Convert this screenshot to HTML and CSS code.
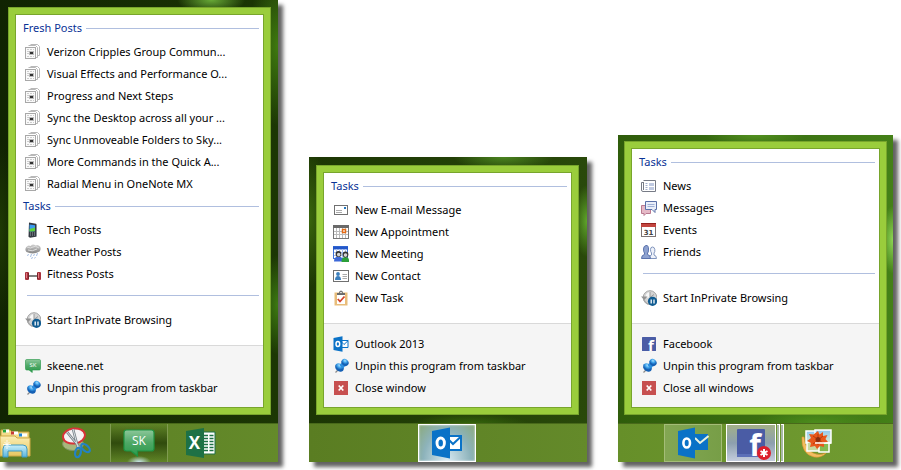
FILE: index.html
```
<!DOCTYPE html>
<html lang="en">
<head>
<meta charset="utf-8">
<title>Taskbar jump lists</title>
<link rel="stylesheet" href="styles.css">
</head>
<body>
<svg class="sprite" aria-hidden="true">
  <defs>
    <linearGradient id="g-sk" x1="0" y1="0" x2="0" y2="1"><stop offset="0" stop-color="#8cc79a"/><stop offset=".5" stop-color="#4da765"/><stop offset="1" stop-color="#2c9a4c"/></linearGradient>
    <linearGradient id="g-folder" x1="0" y1="0" x2="0" y2="1"><stop offset="0" stop-color="#fbeeb4"/><stop offset="1" stop-color="#e8c660"/></linearGradient>
    <linearGradient id="g-glass" x1="0" y1="0" x2="0" y2="1"><stop offset="0" stop-color="#c9effa"/><stop offset="1" stop-color="#5bb5dc"/></linearGradient>
    <radialGradient id="g-blue" cx=".35" cy=".3"><stop offset="0" stop-color="#a9e0ff"/><stop offset=".55" stop-color="#3a9fe8"/><stop offset="1" stop-color="#1560b4"/></radialGradient>
    <linearGradient id="g-cloud" x1="0" y1="0" x2="0" y2="1"><stop offset="0" stop-color="#d0d0d0"/><stop offset="1" stop-color="#858585"/></linearGradient>
    <linearGradient id="g-sky" x1="0" y1="0" x2="0" y2="1"><stop offset="0" stop-color="#8fc8f2"/><stop offset="1" stop-color="#d9edd0"/></linearGradient>
  </defs>
  <symbol id="i-doc" viewBox="0 0 16 16">
    <path d="M5.500 .5h7l2 2v9h-2" fill="#fff" stroke="#b8b8b8"/>
    <path d="M3.500 1.500h7l2 2v10h-2" fill="#fff" stroke="#b8b8b8"/>
    <rect x=".5" y="3.500" width="10" height="11" fill="#fafafa" stroke="#a8a8a8"/>
    <path d="M2 5.500h7M2 7.500h2M2 9.500h2M2 12.500h7" stroke="#cdcdcd" stroke-dasharray="2 1"/>
    <rect x="4" y="7" width="5" height="4" fill="#bbb"/><rect x="5" y="8" width="3" height="2" fill="#333"/>
  </symbol>
  <symbol id="i-phone" viewBox="0 0 16 16">
    <path d="M4 .5l7 1.200v13l-6 1-1.500-1z" fill="#343a42"/><path d="M11 1.700l1 .8v12l-1 .3z" fill="#8a9299"/>
    <path d="M4.500 2.500l5.500.7v6l-5.500.3z" fill="#3a9bf0"/><path d="M4.500 7l5.500-1.500v3.700l-5.500.3z" fill="#5fd23c"/>
    <path d="M5 11h5M5 13h5" stroke="#9aa3aa" stroke-dasharray="1 1"/>
  </symbol>
  <symbol id="i-cloud" viewBox="0 0 16 16">
    <path d="M1.500 8Q-.5 6 1 3.500 3 .5 5.500 2 8-.5 10.500 1.500 13 0 15 2.500 16.500 5 14.500 7.500 8 11 1.500 8z" fill="url(#g-cloud)"/>
    <path d="M2 3q4 2 6 0t6 1M3 6q4 2 9-1" stroke="#ddd" fill="none"/>
    <path d="M3.500 10l-1 2M6.500 10l-1 3M9.500 10l-1 2M12.500 9l-1 3M7.500 13l-1 2M10.500 13l-1 1.500" stroke="#a7c0e4"/>
  </symbol>
  <symbol id="i-dumbbell" viewBox="0 0 16 16">
    <path d="M4 10h8" stroke="#555" stroke-width="1.500"/><rect x="0" y="6" width="4" height="8" rx="1" fill="#a8323d"/><rect x="12" y="6" width="4" height="8" rx="1" fill="#a8323d"/>
    <path d="M1.500 7v5M13.500 7v5" stroke="#df7a82"/><path d="M3.500 7v6M12.500 7v6" stroke="#7c2028"/>
  </symbol>
  <symbol id="i-private" viewBox="0 0 16 16">
    <circle cx="9" cy="7.500" r="6.800" fill="#d4d4d4" stroke="#a5a5a5"/><path d="M9 2v5.500H4.500A5 5 0 0 1 9 2z" fill="#f8f8f8"/><path d="M9 2v5.500l4-3" fill="none" stroke="#999"/>
    <path d="M0 6.500h6.500L3.300 10z" fill="#929292"/><path d="M3 10q2 4 5 4" stroke="#aaa" fill="none" stroke-width="1.500"/>
    <circle cx="11.500" cy="11.300" r="4.600" fill="#0f5b91"/><path d="M10.200 9.500v4M13 9.500v4" stroke="#fff" stroke-width="1.300"/>
  </symbol>
  <symbol id="i-bubble" viewBox="0 0 32 28">
    <path d="M3.500 1h25q2.500 0 2.500 2.500v16q0 2.500-2.500 2.500H14.500v5L8 22H3.500Q1 22 1 19.500v-16Q1 1 3.500 1z" fill="url(#g-sk)" stroke="#1e9442" stroke-width="1.200"/>
  </symbol>
  <symbol id="i-pin" viewBox="0 0 16 16">
    <path d="M2.500 14.500l3-3" stroke="#8a8a8a" stroke-width="1.200"/>
    <ellipse cx="6.500" cy="9.500" rx="4.800" ry="3.800" transform="rotate(42 6.500 9.500)" fill="url(#g-blue)"/>
    <path d="M6.500 7l3-3 3.500 3-3 3.500z" fill="#2c8fe0"/><ellipse cx="12" cy="4.500" rx="3.900" ry="3.200" transform="rotate(42 12 4.500)" fill="url(#g-blue)"/>
  </symbol>
  <symbol id="i-mail" viewBox="0 0 16 16">
    <rect x="1.500" y="3.500" width="13" height="9" fill="#fff" stroke="#707070"/><rect x="11" y="5" width="2" height="2" fill="#2376bd"/><path d="M3 8.500h6M3 10.500h6" stroke="#aaa"/>
  </symbol>
  <symbol id="i-appt" viewBox="0 0 16 16">
    <rect x=".5" y="1.500" width="15" height="13" fill="#fff" stroke="#777"/><path d="M0 2.500h16" stroke="#696969" stroke-width="3"/>
    <path d="M3.500 4v10M6.500 4v10M9.500 4v10M12.500 4v10M1 7.500h14M1 10.500h14" stroke="#bbb"/><rect x="9.500" y="5.500" width="3" height="3" fill="#fff" stroke="#e66b14" stroke-width="1.500"/>
  </symbol>
  <symbol id="i-meeting" viewBox="0 0 16 16">
    <rect x=".5" y=".5" width="14" height="12" fill="#fff" stroke="#3d72d8"/><path d="M0 2h15" stroke="#2357c9" stroke-width="3"/>
    <path d="M3.500 3v9M6.500 3v9M9.500 3v9M12.500 3v9M1 6.500h13M1 9.500h13" stroke="#a9c2f4"/>
    <path d="M1 15.500q0-5 4.500-5t4 5z" fill="#3c68d8"/><path d="M8.500 16q0-5 4-5t3.500 5z" fill="#2c9f3a"/>
    <circle cx="5.500" cy="8" r="2.900" fill="#333"/><circle cx="12.500" cy="8.500" r="2.900" fill="#333"/><circle cx="5.700" cy="8.600" r="1.800" fill="#d3d3d3"/><circle cx="12.500" cy="9.100" r="1.800" fill="#d3d3d3"/>
  </symbol>
  <symbol id="i-contact" viewBox="0 0 16 16">
    <rect x=".5" y="2.500" width="15" height="11" fill="#fff" stroke="#707070"/><circle cx="5" cy="6" r="1.900" fill="#3b7fbd"/><path d="M2 12q0-4 3-4t3 4z" fill="#3b7fbd"/><path d="M9.500 6.500h4.500M9.500 8.500h4.500M9.500 10.500h4.500" stroke="#aaa"/>
  </symbol>
  <symbol id="i-task" viewBox="0 0 16 16">
    <path d="M1.500 2.500h13v13h-13z" fill="#e8bd7a"/><path d="M4 4h8v10H4z" fill="#fff"/><path d="M4 5V3h2q0-2.500 2-2.500T10 3h2v2z" fill="#6b6b6b"/><circle cx="8" cy="2.500" r=".8" fill="#fff"/><path d="M4.800 9l2.200 2.500L11.500 6.500" fill="none" stroke="#d2452d" stroke-width="1.800"/>
  </symbol>
  <symbol id="i-outlook" viewBox="0 0 32 32">
    <path d="M17 9h13v14H17z" fill="#fff" stroke="#0a72c7" stroke-width="2"/><path d="M17 12l5 5 8.500-8" fill="none" stroke="#0a72c7" stroke-width="2"/>
    <path d="M1 4L19 .500v31L1 28z" fill="#0a72c7"/><ellipse cx="9.700" cy="16" rx="3.700" ry="5" fill="none" stroke="#fff" stroke-width="2.900"/>
  </symbol>
  <symbol id="i-outlook-solid" viewBox="0 0 32 32">
    <path d="M18 7h13v16H18z" fill="#0a72c7"/><path d="M18 11l5 5 8.500-7" fill="none" stroke="#e9f2e0" stroke-width="2"/>
    <path d="M1 4L18 .500v31L1 28z" fill="#0a72c7"/><ellipse cx="9.700" cy="16" rx="3.300" ry="4.500" fill="none" stroke="#fff" stroke-width="2.600"/>
  </symbol>
  <symbol id="i-close" viewBox="0 0 16 16">
    <rect x="1" y="1" width="14" height="14" fill="#c75050"/><path d="M5.700 5.500l4.600 5M10.300 5.500l-4.600 5" stroke="#fff" stroke-width="1.700"/>
  </symbol>
  <symbol id="i-news" viewBox="0 0 16 16">
    <path d="M2.500 2.500h12v11H2q-1.500 0-1.500-1.500V4.500h2" fill="#fff" stroke="#777b86"/><path d="M2.500 4v8" stroke="#777b86"/>
    <path d="M4.500 5.500h2M4.500 7.500h2M4.500 9.500h2M4.500 11.500h2" stroke="#a3aecb"/><path d="M8 5h5v3H8zM8 9h5v3H8z" fill="#bfc9e1"/>
  </symbol>
  <symbol id="i-messages" viewBox="0 0 16 16">
    <path d="M.5 5.500h9v8H5L3 15.500v-2H.5z" fill="#e5b9c6" stroke="#b97a90"/><path d="M4.500 1.500h11v8H14v3l-3-3H4.500z" fill="#e9eef9" stroke="#5a70a8"/><path d="M6.500 4.500h7M6.500 6.500h7" stroke="#9fb0d6"/>
  </symbol>
  <symbol id="i-calendar" viewBox="0 0 16 16">
    <rect x=".5" y="1.500" width="14" height="13" fill="#fff" stroke="#7d7474"/><path d="M0 1h15v4H0z" fill="#c2453f"/><path d="M0 1.500h15" stroke="#94211e"/>
  </symbol>
  <symbol id="i-friends" viewBox="0 0 16 16">
    <path d="M8 14.500q0-3 2.500-3.500V9q-1-1-1-3.500T11.500 3t2.300 2.500T13 9v2q2.500.5 2.500 3.500z" fill="#eef2fa" stroke="#8094bd"/>
    <path d="M.5 14.500q0-3.500 3-4V9q-1-1-1-4T5 1.500 7.500 5t-1 4v1.500q3 .5 3 4z" fill="#8ea2d0" stroke="#5b73ad"/>
  </symbol>
  <symbol id="i-explorer" viewBox="0 0 32 32">
    <path d="M1 3h9l2 2h17v8H1z" fill="#f3dc8b" stroke="#c6a03e"/><path d="M3 4h6M12 6h6M20 8h7" stroke="#fff" stroke-width="3"/><path d="M3 4h3" stroke="#24a53a" stroke-width="3"/><path d="M11 6h3" stroke="#c83a35" stroke-width="3"/><path d="M19 8h3" stroke="#2086d9" stroke-width="3"/>
    <path d="M0 9h15l2 2h13v18H0z" fill="url(#g-folder)" stroke="#cfa946"/><path d="M3 30v-8q0-4 4-4h16q4 0 4 4v8h-5v-6H8v6z" fill="url(#g-glass)" stroke="#3e9ac2"/>
    <path d="M7 13v9M3 17.500h8M4.500 15l5 5M9.500 15l-5 5" stroke="#fff" stroke-width=".8"/>
  </symbol>
  <symbol id="i-snip" viewBox="0 0 32 32">
    <ellipse cx="12" cy="17" rx="10.500" ry="6.500" fill="#a7b87d" stroke="#7f9560"/><ellipse cx="13" cy="9" rx="11" ry="7.500" transform="rotate(-8 13 9)" fill="#f5f3f5" stroke="#d83338" stroke-width="2"/>
    <path d="M6 5l13 16M12 2l5 19" stroke="#778087" stroke-width="2.600"/><path d="M6 5l13 16M12 2l5 19" stroke="#d8dee2" stroke-width="1"/>
    <ellipse cx="17" cy="25.500" rx="2.800" ry="4.800" transform="rotate(12 17 25.500)" fill="none" stroke="#2382c4" stroke-width="2.200"/><ellipse cx="24.500" cy="21" rx="2.800" ry="5.200" transform="rotate(-48 24.500 21)" fill="none" stroke="#2382c4" stroke-width="2.200"/>
  </symbol>
  <symbol id="i-book" viewBox="0 0 32 32">
    <path d="M17 5h13v22H17z" fill="#fff" stroke="#1e7145"/><path d="M19 8.500h4m1.500 0h4M19 11.500h4m1.500 0h4M19 14.500h4m1.500 0h4M19 17.500h4m1.500 0h4M19 20.500h4m1.500 0h4M19 23.500h4m1.500 0h4" stroke="#1e7145" stroke-width="1.600"/>
    <path d="M1 4L19 1v30L1 28z" fill="#1e7145"/>
  </symbol>
  <symbol id="i-photos" viewBox="0 0 32 32">
    <path d="M1 10q-1 17 12 20 8 1 12-4-7 3-13 0Q4 22 3 10z" fill="#f2bd62" stroke="#e2942c" stroke-width=".6"/>
    <rect x="5" y="4" width="13" height="12" fill="url(#g-sky)" stroke="#fff" stroke-width="1.500"/><rect x="6" y="15" width="13" height="9" fill="#c6d89e" stroke="#fff" stroke-width="1.500"/><rect x="18" y="14" width="10" height="11" fill="#83bb50" stroke="#fff" stroke-width="1.500"/>
    <rect x="14" y="3" width="16" height="13" fill="url(#g-sky)" stroke="#fff" stroke-width="1.500"/>
    <path d="M17 4l1.500 3.500L22 5l0 4 4.500-1-2 4 2.500 3-4 1 0 4-4-1-3 3-2-3-5 1 1-4-4-2 4-3-2-4 4.500.5z" fill="#e8571b"/><path d="M17 7v11M12 9l10 7M22 9l-10 8" stroke="#b83c0c"/><circle cx="17" cy="12.500" r="2.500" fill="#8c2d0c"/>
    <path d="M14 16h16" stroke="#fff" stroke-width="1.500"/>
  </symbol>
</svg>

<main class="desktops">
  <section class="desktop desktop-ie">
    <nav class="jump" aria-label="skeene.net">
      <h2>Fresh Posts</h2>
      <ul>
        <li><a href="#"><svg><use href="#i-doc"/></svg>Verizon Cripples Group Commun...</a></li>
        <li><a href="#"><svg><use href="#i-doc"/></svg>Visual Effects and Performance O...</a></li>
        <li><a href="#"><svg><use href="#i-doc"/></svg>Progress and Next Steps</a></li>
        <li><a href="#"><svg><use href="#i-doc"/></svg>Sync the Desktop across all your ...</a></li>
        <li><a href="#"><svg><use href="#i-doc"/></svg>Sync Unmoveable Folders to Sky...</a></li>
        <li><a href="#"><svg><use href="#i-doc"/></svg>More Commands in the Quick A...</a></li>
        <li><a href="#"><svg><use href="#i-doc"/></svg>Radial Menu in OneNote MX</a></li>
      </ul>
      <h2>Tasks</h2>
      <ul>
        <li><a href="#"><svg><use href="#i-phone"/></svg>Tech Posts</a></li>
        <li><a href="#"><svg><use href="#i-cloud"/></svg>Weather Posts</a></li>
        <li><a href="#"><svg><use href="#i-dumbbell"/></svg>Fitness Posts</a></li>
      </ul>
      <hr>
      <ul>
        <li><a href="#"><svg><use href="#i-private"/></svg>Start InPrivate Browsing</a></li>
      </ul>
      <ul class="program">
        <li><a href="#"><svg viewBox="0 0 32 28"><use href="#i-bubble" width="32" height="28"/><text x="16" y="16" text-anchor="middle" class="sk-text">SK</text></svg>skeene.net</a></li>
        <li><a href="#"><svg><use href="#i-pin"/></svg>Unpin this program from taskbar</a></li>
      </ul>
    </nav>
    <div class="taskbar">
      <button class="cut" aria-label="File Explorer"><svg><use href="#i-explorer"/></svg></button>
      <button aria-label="Snipping Tool"><svg><use href="#i-snip"/></svg></button>
      <button class="pressed" aria-label="skeene.net"><svg viewBox="0 0 32 28"><use href="#i-bubble" width="32" height="28"/><text x="16" y="16" text-anchor="middle" class="sk-text">SK</text></svg></button>
      <button aria-label="Excel"><svg viewBox="0 0 32 32"><use href="#i-book" width="32" height="32"/><text x="9.500" y="22" text-anchor="middle" class="excel-text">X</text></svg></button>
    </div>
  </section>

  <section class="desktop desktop-outlook">
    <nav class="jump" aria-label="Outlook 2013">
      <h2>Tasks</h2>
      <ul>
        <li><a href="#"><svg><use href="#i-mail"/></svg>New E-mail Message</a></li>
        <li><a href="#"><svg><use href="#i-appt"/></svg>New Appointment</a></li>
        <li><a href="#"><svg><use href="#i-meeting"/></svg>New Meeting</a></li>
        <li><a href="#"><svg><use href="#i-contact"/></svg>New Contact</a></li>
        <li><a href="#"><svg><use href="#i-task"/></svg>New Task</a></li>
      </ul>
      <ul class="program">
        <li><a href="#"><svg><use href="#i-outlook"/></svg>Outlook 2013</a></li>
        <li><a href="#"><svg><use href="#i-pin"/></svg>Unpin this program from taskbar</a></li>
        <li><a href="#"><svg><use href="#i-close"/></svg>Close window</a></li>
      </ul>
    </nav>
    <div class="taskbar">
      <button class="active" aria-label="Outlook"><svg><use href="#i-outlook"/></svg></button>
    </div>
  </section>

  <section class="desktop desktop-facebook">
    <nav class="jump" aria-label="Facebook">
      <h2>Tasks</h2>
      <ul>
        <li><a href="#"><svg><use href="#i-news"/></svg>News</a></li>
        <li><a href="#"><svg><use href="#i-messages"/></svg>Messages</a></li>
        <li><a href="#"><svg viewBox="0 0 16 16"><use href="#i-calendar" width="16" height="16"/><text x="7.500" y="12.500" text-anchor="middle" class="date-text">31</text></svg>Events</a></li>
        <li><a href="#"><svg><use href="#i-friends"/></svg>Friends</a></li>
      </ul>
      <hr>
      <ul>
        <li><a href="#"><svg><use href="#i-private"/></svg>Start InPrivate Browsing</a></li>
      </ul>
      <ul class="program">
        <li><a href="#"><svg viewBox="-2 -2 32 32"><rect width="28" height="28" rx="1" fill="#4a5ca5"/><text x="18" y="27" text-anchor="middle" class="fb-text">f</text></svg>Facebook</a></li>
        <li><a href="#"><svg><use href="#i-pin"/></svg>Unpin this program from taskbar</a></li>
        <li><a href="#"><svg><use href="#i-close"/></svg>Close all windows</a></li>
      </ul>
    </nav>
    <div class="taskbar">
      <button class="running" aria-label="Outlook"><svg><use href="#i-outlook-solid"/></svg></button>
      <button class="stack" aria-label="Facebook, several windows">
        <span class="sheet"><svg viewBox="-2 -2 32 32"><rect width="28" height="28" rx="1" fill="#4a5ca5"/><path d="M0 25h28v3H0z" fill="#5c70b8"/><text x="18" y="27" text-anchor="middle" class="fb-text">f</text></svg>
          <svg class="badge" viewBox="0 0 14 14"><circle cx="7" cy="7" r="7" fill="#dc1f2c"/><path d="M7 3v8M3.500 5l7 4M10.500 5l-7 4" stroke="#fff" stroke-width="2"/></svg></span>
        <span class="edge"></span><span class="edge"></span>
      </button>
      <button aria-label="Photos"><svg><use href="#i-photos"/></svg></button>
    </div>
  </section>
</main>
</body>
</html>
```
FILE: styles.css
```
* { box-sizing: border-box; }
body {
  margin: 0;
  padding: 0 8px 8px 0;
  background: #fff;
  color: #000;
  font: 11px/22px "Noto Sans", "Open Sans", sans-serif;
}
.sprite { position: absolute; width: 0; height: 0; }

.desktops {
  display: grid;
  grid-template-columns: 278fr 278fr 275fr;
  gap: 31px;
  align-items: end;
}
.desktop {
  padding-top: 8px;
  box-shadow: 5px 5px 4px rgba(0, 0, 0, .62);
}
.desktop-ie {
  padding-top: 7px;
  background:
    radial-gradient(ellipse 34px 14px at 76% 0, #67a836, transparent),
    radial-gradient(ellipse 30px 80px at 100% 10%, #3f7a10, transparent),
    radial-gradient(ellipse 20px 50px at 100% 66%, #3d7a12, transparent),
    radial-gradient(ellipse 16px 90px at 0 50%, #1f3a04, transparent),
    linear-gradient(90deg, #102302, #1c3704);
}
.desktop-outlook {
  background:
    radial-gradient(ellipse 50px 14px at 70% 0, #4b8420, transparent),
    radial-gradient(ellipse 14px 36px at 100% 21%, #5fa52b, transparent),
    radial-gradient(ellipse 60px 12px at 58% 88%, #376a0c, transparent),
    radial-gradient(ellipse 20px 70px at 0 20%, #3a660d, transparent),
    linear-gradient(90deg, #1c3604, #29490a);
}
.desktop-facebook {
  padding-top: 6px;
  background:
    radial-gradient(ellipse 12px 34px at 100% 32%, #8ed654, transparent),
    radial-gradient(ellipse 60px 14px at 72% 88%, #4c8c1c, transparent),
    radial-gradient(ellipse 50px 12px at 50% 0, #52901f, transparent),
    linear-gradient(90deg, #2f5c0b, #448018);
}

.jump {
  margin: 0 8px;
  padding: 6px;
  border: 1px solid #78a52c;
  background: #9acd3c;
}
.desktop-ie .jump { margin-right: 7px; }
.desktop-outlook .jump { margin-left: 7px; }
.desktop-facebook .jump { margin: 0 6px; }
.jump > * { border: 0 solid #78a52c; border-width: 0 1px; background: #fff; }
.jump h2 {
  display: flex;
  align-items: center;
  gap: 4px;
  margin: 0;
  padding: 0 4px 0 7px;
  color: #0a3296;
  font: inherit;
}
.jump h2::after { content: ""; flex: 1; height: 1px; background: #b0bfdf; }
.jump h2:first-child { padding-top: 2px; border-top-width: 1px; }
.jump ul { margin: 0; padding: 0; list-style: none; }
.jump h2 + ul { padding-top: 2px; }
.jump hr {
  height: 24px;
  margin: 0;
  padding: 10px 4px 13px 11px;
  background: linear-gradient(#b0bfdf, #b0bfdf) content-box, #fff;
}
.jump .program {
  padding: 9px 0 8px;
  border-bottom-width: 1px;
  background: #f5f5f5;
}
.jump ul:nth-last-child(2) { padding-bottom: 15px; box-shadow: inset 0 -1px #d9d9d9; }
.jump a {
  display: flex;
  align-items: center;
  gap: 6px;
  height: 22px;
  padding-left: 9px;
  color: inherit;
  text-decoration: none;
  white-space: nowrap;
}
.jump a svg { width: 16px; height: 16px; }

.taskbar {
  display: flex;
  gap: 4px;
  height: 39px;
  margin-top: 8px;
  padding-top: 1px;
  background: linear-gradient(90deg, #5a7d22, #648a2a);
  box-shadow: inset 0 1px #48691a;
}
.desktop-outlook .taskbar { padding-left: 109px; }
.desktop-facebook .taskbar { padding-left: 46px; background: linear-gradient(90deg, #668f29, #719c31); }
.taskbar button {
  display: flex;
  align-items: center;
  justify-content: center;
  width: 58px;
  padding: 0;
  border: 0;
  background: none;
}
.taskbar button svg { width: 32px; height: 32px; }
.taskbar .cut { justify-content: flex-start; width: 44px; }
.taskbar .pressed {
  border: solid #7f9b50;
  border-width: 0 1px;
  background:
    radial-gradient(ellipse 12px 6px at 50% 100%, #c8e6ec, transparent),
    linear-gradient(transparent, #304b0d 50%, transparent);
}
.taskbar .active {
  border: 1px solid #fff;
  background: radial-gradient(ellipse at 50% 100%, #d8e9f2, #8db3bb 60%, #8baa7c);
  box-shadow: inset 0 0 2px #fff;
}
.taskbar .running { border: 1px solid #a4bd77; background: linear-gradient(90deg, #83a653, #779e47); }
.taskbar .stack { align-items: stretch; gap: 1px; }
.sheet {
  position: relative;
  display: flex;
  flex: 1;
  align-items: center;
  justify-content: center;
  border: 1px solid #fff;
  background: linear-gradient(#a2b088, #8d9fae 50%, #c4cddd);
}
.taskbar .sheet .badge { position: absolute; right: 4px; bottom: 1px; width: 14px; height: 14px; }
.edge { width: 3px; border: solid #fff; border-width: 1px 1px 1px 0; background: #a9b8a6; }

.sk-text { font: 12px "Open Sans", sans-serif; fill: #fff; }
.date-text { font: bold 7px "DejaVu Sans", sans-serif; fill: #444; }
.fb-text { font: bold 30px "Open Sans", sans-serif; fill: #fff; }
.excel-text { font: bold 17px "Open Sans", sans-serif; fill: #fff; }
```
